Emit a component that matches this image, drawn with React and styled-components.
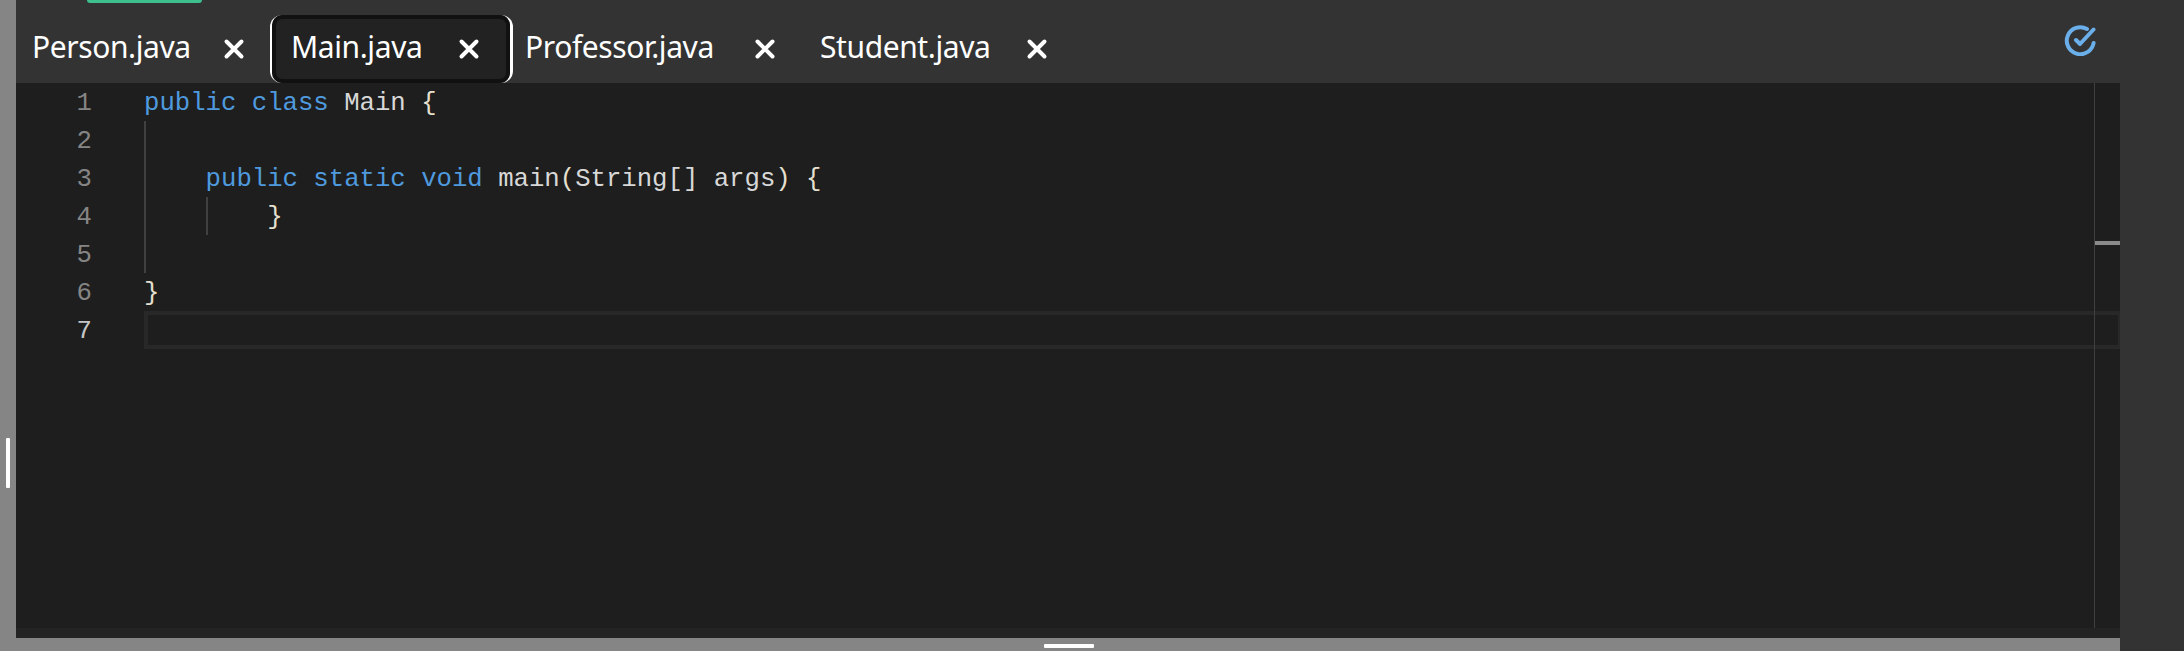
import React from "react";
import styled, { createGlobalStyle } from "styled-components";

const GlobalStyle = createGlobalStyle`
  html, body {
    margin: 0;
    padding: 0;
    background: #333333;
  }
`;

const Page = styled.div`
  width: 2184px;
  height: 651px;
  overflow: hidden;
  background: #333333;
`;

const Workspace = styled.div`
  width: 2120px;
  height: 651px;
  display: flex;
  flex-direction: column;
`;

const Body = styled.div`
  flex: 1;
  min-height: 0;
  display: flex;
`;

const Sash = styled.div`
  width: 16px;
  flex-shrink: 0;
  background: #858585;
  display: flex;
  padding: 438px 0 0 6px;
  box-sizing: border-box;
`;

const SashGrip = styled.div`
  width: 4px;
  height: 50px;
  border-radius: 1px;
  background: #ffffff;
`;

const Pane = styled.div`
  flex: 1;
  min-width: 0;
  display: flex;
  flex-direction: column;
`;

const TopBar = styled.div`
  height: 83px;
  flex-shrink: 0;
  background: #333333;
`;

const Pill = styled.div`
  width: 115px;
  height: 3px;
  margin-left: 71px;
  border-radius: 0 0 8px 8px;
  background: #3dbf8e;
`;

const TabRow = styled.div`
  margin-top: 12px;
  height: 68px;
  display: flex;
  justify-content: space-between;
  padding-right: 24px;
`;

const Tabs = styled.div`
  display: flex;
`;

const Tab = styled.div`
  display: flex;
  height: 68px;
  box-sizing: border-box;
  width: ${(p) => p.$width}px;
  ${(p) =>
    p.$active &&
    `
    border-left: 2px solid #ffffff;
    border-right: 3px solid #ffffff;
    border-radius: 12px;
  `}
`;

const TabFace = styled.div`
  flex: 1;
  display: flex;
  align-items: center;
  box-sizing: border-box;
  padding-left: ${(p) => p.$inset}px;
  color: #ffffff;
  font-family: "Noto Sans", sans-serif;
  font-size: 30px;
  ${(p) =>
    p.$active &&
    `
    background: #222222;
    border: 4px solid #111111;
    border-radius: 10px;
  `}
`;

const TabLabel = styled.span`
  width: ${(p) => p.$width}px;
  padding-bottom: 6px;
  white-space: nowrap;
  letter-spacing: -0.4px;
`;

const CloseIcon = styled.svg`
  width: 22px;
  height: 22px;
  margin-left: 36px;
  flex-shrink: 0;
`;

const StatusIcon = styled.svg`
  width: 32px;
  height: 32px;
  margin-top: 9px;
`;

const Editor = styled.div`
  flex: 1;
  min-height: 0;
  display: flex;
  background: #1e1e1e;
  border-bottom: 10px solid #232323;
  font-family: "Liberation Mono", monospace;
  font-size: 25.67px;
  position: relative;
`;

const Gutter = styled.div`
  width: 128px;
  flex-shrink: 0;
`;

const LineNumber = styled.div`
  height: 38px;
  line-height: 42px;
  width: 76px;
  text-align: right;
  color: ${(p) => (p.$active ? "#c6c6c6" : "#858585")};
`;

const Code = styled.div`
  flex: 1;
  min-width: 0;
`;

const Line = styled.div`
  height: 38px;
  line-height: 42px;
  white-space: pre;
  box-sizing: border-box;
  color: #d8d8d8;
  ${(p) => p.$current && "border: 4px solid #282828; border-right-width: 2px;"}
`;

const Guide = styled.span`
  display: inline-block;
  vertical-align: top;
  width: 61.6px;
  height: 38px;
  box-sizing: border-box;
  border-left: 2px solid #404040;
`;

const Keyword = styled.span`
  color: #4f9ade;
`;

const Bracket = styled.span`
  color: #e6e0d0;
`;

const Minimap = styled.div`
  position: absolute;
  top: 0;
  bottom: 0;
  right: 0;
  width: 26px;
  border-left: 1px solid #404040;
  box-sizing: border-box;
`;

const MinimapThumb = styled.div`
  height: 4px;
  margin-top: 158px;
  background: #8a8a8a;
`;

const BottomBar = styled.div`
  height: 13px;
  flex-shrink: 0;
  background: #858585;
  display: flex;
  justify-content: center;
  padding-top: 6px;
  box-sizing: border-box;
  padding-left: 18px;
`;

const BottomGrip = styled.div`
  width: 50px;
  height: 4px;
  border-radius: 1px;
  background: #ffffff;
`;

const tabs = [
  { name: "Person.java", width: 254, inset: 16, label: 155 },
  { name: "Main.java", width: 243, inset: 15, label: 131, active: true },
  { name: "Professor.java", width: 294, inset: 12, label: 193 },
  { name: "Student.java", width: 260, inset: 13, label: 170 },
];

function Close() {
  return (
    <CloseIcon viewBox="0 0 22 22">
      <path
        d="M3.5 3.5 L18.5 18.5 M18.5 3.5 L3.5 18.5"
        stroke="#ffffff"
        strokeWidth="4"
        strokeLinecap="round"
        fill="none"
      />
    </CloseIcon>
  );
}

function App() {
  return (
    <Page>
      <GlobalStyle />
      <Workspace>
        <Body>
          <Sash>
            <SashGrip />
          </Sash>
          <Pane>
            <TopBar>
              <Pill />
              <TabRow>
                <Tabs>
                  {tabs.map((tab) => (
                    <Tab key={tab.name} $width={tab.width} $active={tab.active}>
                      <TabFace $inset={tab.inset} $active={tab.active}>
                        <TabLabel $width={tab.label}>{tab.name}</TabLabel>
                        <Close />
                      </TabFace>
                    </Tab>
                  ))}
                </Tabs>
                <StatusIcon viewBox="0 0 32 32">
                  <path
                    d="M23 5 A13.5 13.5 0 1 0 29.6 19"
                    stroke="#6aaeea"
                    strokeWidth="4"
                    strokeLinecap="round"
                    fill="none"
                  />
                  <path
                    d="M12 16 L16 20 L29.5 5.5"
                    stroke="#6aaeea"
                    strokeWidth="4"
                    strokeLinecap="round"
                    strokeLinejoin="round"
                    fill="none"
                  />
                </StatusIcon>
              </TabRow>
            </TopBar>
            <Editor>
              <Gutter>
                {[1, 2, 3, 4, 5, 6, 7].map((n) => (
                  <LineNumber key={n} $active={n === 7}>
                    {n}
                  </LineNumber>
                ))}
              </Gutter>
              <Code>
                <Line>
                  <Keyword>public class</Keyword> Main <Bracket>{"{"}</Bracket>
                </Line>
                <Line>
                  <Guide />
                </Line>
                <Line>
                  <Guide />
                  <Keyword>public static void</Keyword> main<Bracket>(</Bracket>String[] args<Bracket>)</Bracket> <Bracket>{"{"}</Bracket>
                </Line>
                <Line>
                  <Guide />
                  <Guide />
                  <Bracket>{"}"}</Bracket>
                </Line>
                <Line>
                  <Guide />
                </Line>
                <Line>
                  <Bracket>{"}"}</Bracket>
                </Line>
                <Line $current />
              </Code>
              <Minimap>
                <MinimapThumb />
              </Minimap>
            </Editor>
          </Pane>
        </Body>
        <BottomBar>
          <BottomGrip />
        </BottomBar>
      </Workspace>
    </Page>
  );
}

export default App;
